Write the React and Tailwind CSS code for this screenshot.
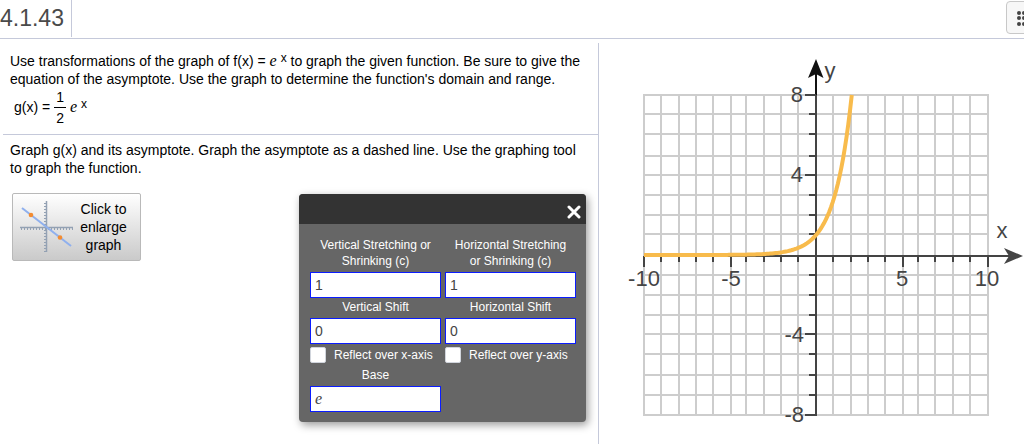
import React, { useState } from 'react';

const SANS = "font-['Liberation_Sans',Arial,sans-serif]";
const SERIF = "font-['Liberation_Serif',serif]";

// grid line positions, snapped to whole pixels (-10..10 and 8..-8)
const COLS = [45, 62, 80, 97, 114, 132, 147, 165, 182, 199, 217, 234, 252, 269, 286, 304, 319, 336, 354, 371, 389];
const ROWS = [52, 71, 91, 113, 132, 152, 172, 191, 213, 232, 252, 272, 291, 311, 332, 352, 372];

const X0 = COLS[10];
const Y0 = ROWS[8];

const curvePath = () => {
  const points = [];
  const end = Math.log(8);
  for (let i = 0; i <= 120; i++) {
    const x = -10 + ((end + 10) * i) / 120;
    points.push(`${(X0 + x * 17.2).toFixed(2)},${(Y0 - 1 - Math.exp(x) * 20).toFixed(2)}`);
  }
  return `M${points.join(' L')}`;
};

const Graph = () => (
  <svg viewBox="0 0 425 401" className="w-full block" role="img" aria-label="Graph of the function">
    <g stroke="#cdcdcd" strokeWidth="2" strokeLinecap="square">
      {COLS.map(x => <line key={x} x1={x} x2={x} y1={ROWS[0]} y2={ROWS[16]} />)}
      {ROWS.map(y => <line key={y} x1={COLS[0]} x2={COLS[20]} y1={y} y2={y} />)}
    </g>

    {/* axes */}
    <g stroke="#444" strokeWidth="2">
      <line x1={COLS[0]} x2="412" y1={Y0} y2={Y0} />
      <line x1={X0} x2={X0} y1={ROWS[0]} y2={ROWS[16] + 1} />
      <line x1={X0} x2={X0} y1="30" y2={ROWS[0]} stroke="#111" />
      {COLS.map((x, i) => i !== 10 && (
        <line key={x} x1={x} x2={x} y1={Y0} y2={Y0 + (i % 5 === 0 ? 11 : 6)} />
      ))}
      {ROWS.map((y, i) => i !== 8 && (
        <line key={y} x1={X0 - (i % 4 === 0 ? 11 : 7)} x2={X0} y1={y} y2={y} />
      ))}
    </g>
    <path d="M217 16 L224.500 35 L217 31 L209 35 Z" fill="#111" />
    <path d="M424 213 L405 221 L410 213 L405 205 Z" fill="#444" />

    <path d={curvePath()} fill="none" stroke="#f8bb4c" strokeWidth="4" />

    <g fill="#444" fontSize="22" fontFamily="'Liberation Sans', Arial, sans-serif">
      <text x="204" y="59" textAnchor="end">8</text>
      <text x="204" y="139" textAnchor="end">4</text>
      <text x="205" y="299" textAnchor="end">-4</text>
      <text x="205" y="379" textAnchor="end">-8</text>
      <text x="45" y="243" textAnchor="middle">-10</text>
      <text x="132" y="243" textAnchor="middle">-5</text>
      <text x="303" y="243" textAnchor="middle">5</text>
      <text x="388" y="243" textAnchor="middle">10</text>
      <text x="231" y="35" textAnchor="middle">y</text>
      <text x="403" y="195" textAnchor="middle">x</text>
    </g>
  </svg>
);

const GraphIcon = () => (
  <svg width="54" height="54" viewBox="0 0 54 54" aria-hidden="true" className="shrink-0">
    <g stroke="#93a1b3" fill="none">
      <path d="M1 27.500 H54 M27.500 1 V52" strokeWidth="1.500" />
      <path d="M2 29 H54" strokeDasharray="1 2" strokeWidth="2" />
      <path d="M26 3 V52" strokeDasharray="1 2" strokeWidth="2" />
    </g>
    <path d="M3 8 L52 46" stroke="#8fb0ee" strokeWidth="2" />
    <circle cx="12" cy="15" r="2.300" fill="#f28c32" />
    <circle cx="41" cy="37.500" r="2.300" fill="#f28c32" />
  </svg>
);

const Field = ({ id, label, value, onChange, italic }) => (
  <div className="flex flex-col justify-end">
    <label htmlFor={id} className="px-2 pt-px pb-[3px] text-center">{label}</label>
    <input
      id={id}
      type="text"
      value={value}
      onChange={e => onChange(id, e.target.value)}
      className={`w-full h-[26px] px-1 bg-white border border-[#0a1cff] text-[#444] outline-none ${
        italic ? `${SERIF} italic text-base` : 'text-sm'}`}
    />
  </div>
);

const Check = ({ id, label }) => (
  <label htmlFor={id} className="flex items-center gap-2 h-[22px] whitespace-nowrap">
    <input id={id} type="checkbox"
      className="appearance-none size-4 shrink-0 bg-white border border-gray-300 rounded-xs checked:bg-blue-500" />
    {label}
  </label>
);

const ToolDialog = ({ onClose }) => {
  const [values, setValues] = useState({ vStretch: '1', hStretch: '1', vShift: '0', hShift: '0', base: 'e' });
  const update = (id, v) => setValues(prev => ({ ...prev, [id]: v }));

  return (
    <section className="w-[287px] shrink-0 mt-px rounded overflow-hidden bg-[#666] text-white text-xs shadow-[2px_3px_8px_rgba(0,0,0,0.4)]">
      <div className="h-[30px] bg-[#333] flex justify-end items-end px-[5px] pb-[5px]">
        <button type="button" aria-label="Close" onClick={onClose}>
          <svg width="14" height="14" viewBox="0 0 14 14" className="block" aria-hidden="true">
            <path d="M2 2 L12 12 M12 2 L2 12" stroke="#fff" strokeWidth="3" strokeLinecap="round" />
          </svg>
        </button>
      </div>
      <form className="grid grid-cols-2 gap-x-1 pl-[11px] pr-2.5 pt-3 pb-2.5 leading-4">
        <Field id="vStretch" label="Vertical Stretching or Shrinking (c)" value={values.vStretch} onChange={update} />
        <Field id="hStretch" label="Horizontal Stretching or Shrinking (c)" value={values.hStretch} onChange={update} />
        <Field id="vShift" label="Vertical Shift" value={values.vShift} onChange={update} />
        <Field id="hShift" label="Horizontal Shift" value={values.hShift} onChange={update} />
        <Check id="reflectX" label="Reflect over x-axis" />
        <Check id="reflectY" label="Reflect over y-axis" />
        <Field id="base" label="Base" value={values.base} onChange={update} italic />
      </form>
    </section>
  );
};

const Exp = () => (
  <span className="whitespace-nowrap">
    <i className={`${SERIF} text-base leading-none`}>e</i>
    <span className="ml-1 text-xs leading-none align-[4px]">x</span>
  </span>
);

export default function App() {
  const [open, setOpen] = useState(true);

  return (
    <div className={`min-h-screen flex flex-col overflow-hidden bg-white text-black text-sm leading-[18px] ${SANS}`}>
      <header className="flex items-start justify-between border-b border-[#c5c9da]">
        <h1 className="h-[37px] pr-[7px] border-r border-[#c5c9da] text-[23px] leading-[37px] text-[#4a4a4a]">4.1.43</h1>
        <button type="button" aria-label="Menu"
          className="w-10 h-[33px] mt-px mb-1 -mr-[22px] flex items-center pl-2.5 border border-[#c8c8c8] rounded bg-[#f7f7f7]">
          <svg width="16" height="16" viewBox="0 0 16 16" fill="#444" aria-hidden="true">
            {[3, 8, 14].map(y => [2, 7, 12].map(x => (
              <circle key={`${x}-${y}`} cx={x} cy={y} r="2" />
            )))}
          </svg>
        </button>
      </header>

      <main className="flex-1 mt-1 grid grid-cols-[599fr_425fr]">
        <div className="border-r border-[#c5c9da]">
          <div className="ml-[3px] pl-[7px] pt-[9px] pb-2 border-b border-[#c5c9da]">
            <p className="pr-3">
              Use transformations of the graph of f(x) = <Exp /> to graph the given function. Be sure to give the
              equation of the asymptote. Use the graph to determine the function's domain and range.
            </p>
            <div className="flex items-center gap-1 pl-1 h-[38px]">
              <span>g(x) =</span>
              <span className="flex flex-col items-center leading-5">
                <span className="px-0.5 border-b border-black">1</span>
                <span>2</span>
              </span>
              <Exp />
            </div>
          </div>

          <p className="pl-2.5 pr-3 pt-1.5">
            Graph g(x) and its asymptote. Graph the asymptote as a dashed line. Use the graphing tool to graph the function.
          </p>

          <div className="flex items-start justify-between pl-3 pr-3 mt-4">
            <button type="button" onClick={() => setOpen(true)}
              className="w-[129px] h-[68px] flex items-center gap-1 pl-1.5 pr-2.5 border border-[#b9b9b9] rounded-xs bg-linear-to-b from-white to-[#cacaca] text-sm leading-[18px]">
              <GraphIcon />
              <span className="flex-1">Click to enlarge graph</span>
            </button>
            {open && <ToolDialog onClose={() => setOpen(false)} />}
          </div>
        </div>

        <div>
          <Graph />
        </div>
      </main>
    </div>
  );
}
